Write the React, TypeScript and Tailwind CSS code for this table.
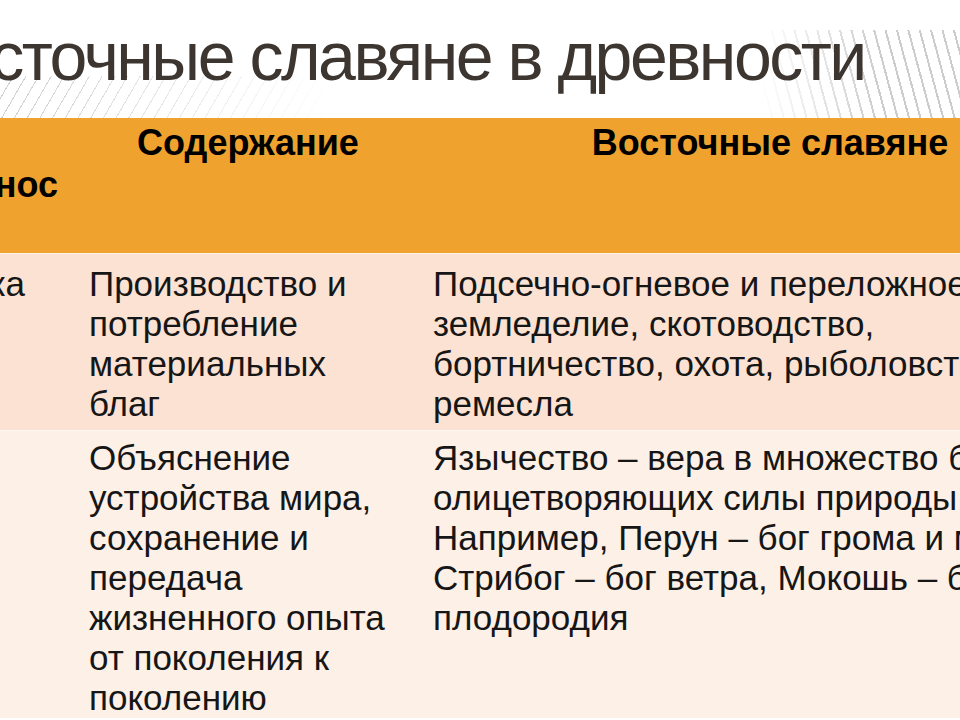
import React from 'react';

const rows = [
  {
    sphere: 'Экономика',
    content: ['Производство и', 'потребление', 'материальных', 'благ'],
    slavs: [
      'Подсечно-огневое и переложное',
      'земледелие, скотоводство,',
      'бортничество, охота, рыболовство,',
      'ремесла',
    ],
    bg: 'bg-[#fbe2d3]',
    h: 'h-[177px]',
    pt: 'pt-[10px]',
  },
  {
    sphere: '',
    content: [
      'Объяснение',
      'устройства мира,',
      'сохранение и',
      'передача',
      'жизненного опыта',
      'от поколения к',
      'поколению',
    ],
    slavs: [
      'Язычество – вера в множество богов,',
      'олицетворяющих силы природы.',
      'Например, Перун – бог грома и молнии,',
      'Стрибог – бог ветра, Мокошь – богиня',
      'плодородия',
    ],
    bg: 'bg-[#fdf0e7]',
    h: 'h-[286px]',
    pt: 'pt-[7px]',
  },
];

function Lines({ lines }: { lines: string[] }) {
  return (
    <>
      {lines.map((l, i) => (
        <div key={i} className="whitespace-nowrap">
          {l}
        </div>
      ))}
    </>
  );
}

export default function App() {
  return (
    <div className="w-[960px] h-[720px] overflow-hidden bg-white font-['Liberation_Sans',Arial,sans-serif]">
      {/* заголовок слайда */}
      <div className="relative h-[118px]">
        <div className="pointer-events-none absolute left-0 top-[76px] h-[42px] w-[340px] bg-[image:repeating-linear-gradient(120deg,#cfcfcf_0px,#cfcfcf_1px,transparent_1px,transparent_11px)] [mask-image:linear-gradient(to_right,black,transparent)]" />
        <div className="pointer-events-none absolute right-0 top-[30px] h-[88px] w-[200px] bg-[image:repeating-linear-gradient(75deg,#cccccc_0px,#cccccc_2px,transparent_2px,transparent_11px)] [mask-image:linear-gradient(to_left,black_40%,transparent)]" />
        <h1 className="relative -ml-[88px] pt-[22px] whitespace-nowrap text-[68px] leading-none tracking-[-2.5px] text-[#3d3530]">
          Восточные славяне в древности
        </h1>
      </div>

      <table className="-ml-[186px] w-[1311px] table-fixed border-collapse text-[35px] leading-[40px] text-[#161616]">
        <colgroup>
          <col className="w-[261px]" />
          <col className="w-[340px]" />
          <col className="w-[710px]" />
        </colgroup>
        <thead>
          <tr className="h-[135px] bg-[#f0a22e] text-[36px] text-black">
            <th className="align-middle pr-[17px] text-right font-bold">Этнос</th>
            <th className="align-top pt-[5px] pl-[6px] text-center font-bold">Содержание</th>
            <th className="align-top pt-[5px] text-center font-bold">Восточные славяне</th>
          </tr>
        </thead>
        <tbody>
          {rows.map((r, i) => (
            <tr key={i} className={`${r.bg} ${r.h} border-t border-white/60`}>
              <td className={`align-top pr-[50px] text-right whitespace-nowrap ${r.pt}`}>{r.sphere}</td>
              <td className={`align-top pl-[14px] ${r.pt}`}>
                <Lines lines={r.content} />
              </td>
              <td className={`align-top pl-[18px] ${r.pt}`}>
                <Lines lines={r.slavs} />
              </td>
            </tr>
          ))}
        </tbody>
      </table>
    </div>
  );
}
